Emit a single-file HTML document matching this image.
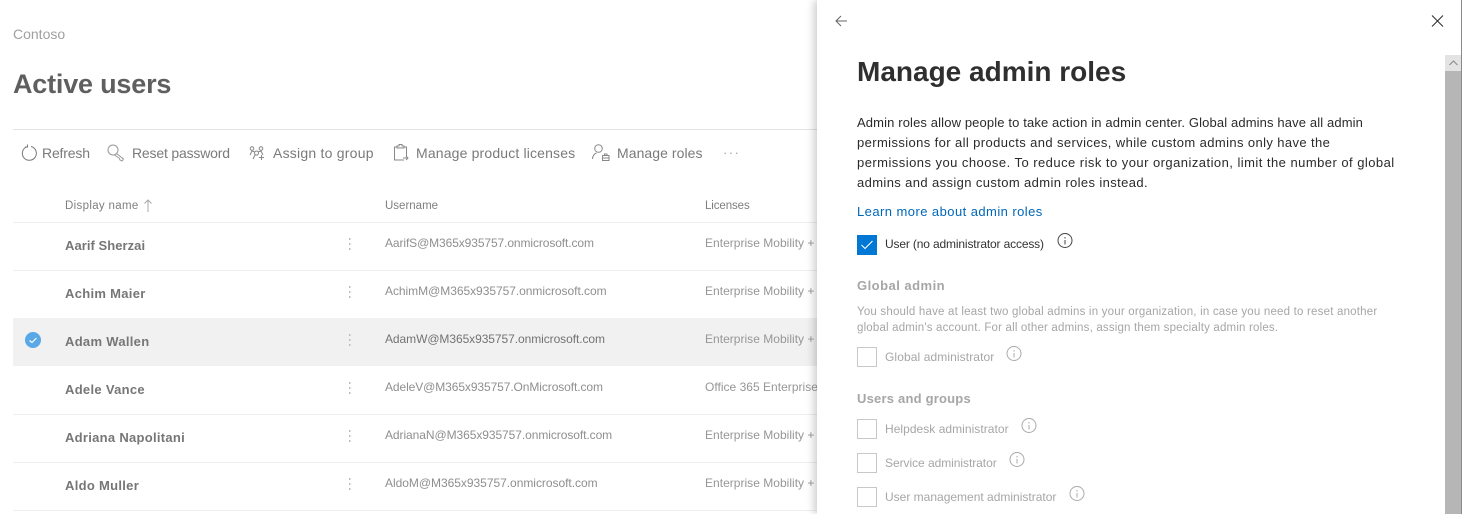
<!DOCTYPE html>
<html><head><meta charset="utf-8"><style>
html,body{margin:0;padding:0;background:#fff}
body{width:1462px;height:514px;overflow:hidden;position:relative;font-family:"Liberation Sans",sans-serif}
.t{position:absolute;white-space:nowrap;line-height:16px}
.b{position:absolute}
.n{font-size:13px;font-weight:bold;color:#767676;left:65px;letter-spacing:.3px}
.u{font-size:12px;color:#8f8f8f;left:385px;letter-spacing:-.07px}
.l{font-size:12px;color:#969696;left:705px;letter-spacing:.02px}
.c{font-size:14px;color:#7a7a7a}
.h{font-size:11.5px;color:#7f7f7f}
.line{position:absolute;left:13px;width:804px;height:1px;background:#eeeeee}
.cb{position:absolute;left:857px;width:18px;height:18px;border:1px solid #c8c8c8;background:#fff}
.d{font-size:12px;color:#a6a6a6;left:885px}
.p{font-size:13px;color:#2b2b2b;left:857px}
.g{font-size:13px;font-weight:bold;color:#a6a6a6;left:857px}
.s{font-size:11.5px;color:#a6a6a6;left:857px}
svg{position:absolute;overflow:visible}
</style></head><body>
<div class="t" style="left:13px;top:26px;font-size:14px;color:#a0a0a0">Contoso</div>
<div class="t" style="left:13px;top:66px;line-height:36px;font-size:27px;font-weight:bold;color:#5f5f5f;letter-spacing:-.2px">Active users</div>
<div class="line" style="top:129px;background:#e3e3e3"></div>

<svg style="left:21px;top:144px" width="18" height="18" fill="none" stroke="#777" stroke-width="1"><path d="M6 2.700A7 7 0 1 0 10 2.500M6.500 .5V3H4"/></svg>
<div class="t c" style="left:42px;top:145px;letter-spacing:-.17px">Refresh</div>
<svg style="left:107px;top:144px" width="18" height="18" fill="none" stroke="#999" stroke-width="1"><circle cx="6" cy="6" r="5"/><path d="M9.500 9.500l7 5.500-1.500 2-2-1-1-2-4.500-3"/></svg>
<div class="t c" style="left:132px;top:145px;letter-spacing:-.18px">Reset password</div>
<svg style="left:249px;top:146px" width="17" height="15" fill="none" stroke="#888" stroke-width="1"><circle cx="3" cy="2.500" r="1.800"/><circle cx="12" cy="2.500" r="1.800"/><circle cx="7.500" cy="7" r="2"/><path d="M1 9l2-4 3 1M14 9l-2-4-3 1M4 13l2-4h3M12.500 9v5M10 11.500h5"/></svg>
<div class="t c" style="left:273px;top:145px;letter-spacing:.23px">Assign to group</div>
<svg style="left:393px;top:144px" width="16" height="17" fill="none" stroke="#888" stroke-width="1"><path d="M4 3H1.500v13H11M11 3h2.500v10M4 4V2h2V.5h3V2h2v2zM10 14h5M13 12l2 2-2 2"/></svg>
<div class="t c" style="left:416px;top:145px;letter-spacing:.16px">Manage product licenses</div>
<svg style="left:592px;top:144px" width="18" height="17" fill="none" stroke="#888" stroke-width="1"><circle cx="6.500" cy="4.500" r="3.800"/><path d="M.5 15c0-3 2-5.500 4-6M10.500 11.500h6.500v5h-6.500zM10.500 14h6.500M12.500 11.500V10h2.500v1.500"/></svg>
<div class="t c" style="left:617px;top:145px;letter-spacing:.06px">Manage roles</div>
<div class="t" style="left:723px;top:145px;font-size:13px;color:#a6a6a6;letter-spacing:1.400px">···</div>

<div class="t h" style="left:65px;top:198px;letter-spacing:.33px">Display name</div>
<svg style="left:144px;top:199px" width="8" height="13" fill="none" stroke="#aaa"><path d="M4 13V1M.5 4.500L4 1l3.500 3.500"/></svg>
<div class="t h" style="left:385px;top:198px">Username</div>
<div class="t h" style="left:705px;top:198px;letter-spacing:-.1px">Licenses</div>
<div class="line" style="top:222px"></div>

<div class="t n" style="top:238px;letter-spacing:.05px">Aarif Sherzai</div>
<div class="t u" style="top:235px;letter-spacing:-.1px">AarifS@M365x935757.onmicrosoft.com</div>
<div class="t l" style="top:235px">Enterprise Mobility +</div>
<div class="line" style="top:270px"></div>

<div class="t n" style="top:286px">Achim Maier</div>
<div class="t u" style="top:283px;letter-spacing:-.04px">AchimM@M365x935757.onmicrosoft.com</div>
<div class="t l" style="top:283px">Enterprise Mobility +</div>

<div class="b" style="left:13px;top:318px;width:804px;height:48px;background:#f1f1f1"></div>
<svg style="left:25px;top:332px" width="16" height="16"><circle cx="8" cy="8" r="8" fill="#5ba8e6"/><path d="M4.500 8.500L7 10.500 11.500 6" fill="none" stroke="#fff" stroke-width="1.200"/></svg>
<div class="t n" style="top:334px">Adam Wallen</div>
<div class="t u" style="top:331px;color:#737373">AdamW@M365x935757.onmicrosoft.com</div>
<div class="t l" style="top:331px">Enterprise Mobility +</div>

<div class="t n" style="top:382px">Adele Vance</div>
<div class="t u" style="top:379px;letter-spacing:-.09px">AdeleV@M365x935757.OnMicrosoft.com</div>
<div class="t l" style="top:379px">Office 365 Enterprise</div>
<div class="line" style="top:414px"></div>

<div class="t n" style="top:430px;letter-spacing:.29px">Adriana Napolitani</div>
<div class="t u" style="top:427px">AdrianaN@M365x935757.onmicrosoft.com</div>
<div class="t l" style="top:427px">Enterprise Mobility +</div>
<div class="line" style="top:462px"></div>

<div class="t n" style="top:478px">Aldo Muller</div>
<div class="t u" style="top:475px;letter-spacing:-.03px">AldoM@M365x935757.onmicrosoft.com</div>
<div class="t l" style="top:475px">Enterprise Mobility +</div>
<div class="line" style="top:510px"></div>

<svg style="left:349px;top:238px" width="2" height="256" fill="#bdbdbd">
<rect y="0" width="1.500" height="2"/><rect y="5" width="1.500" height="2"/><rect y="10" width="1.500" height="2"/>
<rect y="48" width="1.500" height="2"/><rect y="53" width="1.500" height="2"/><rect y="58" width="1.500" height="2"/>
<rect y="96" width="1.500" height="2"/><rect y="101" width="1.500" height="2"/><rect y="106" width="1.500" height="2"/>
<rect y="144" width="1.500" height="2"/><rect y="149" width="1.500" height="2"/><rect y="154" width="1.500" height="2"/>
<rect y="192" width="1.500" height="2"/><rect y="197" width="1.500" height="2"/><rect y="202" width="1.500" height="2"/>
<rect y="240" width="1.500" height="2"/><rect y="245" width="1.500" height="2"/><rect y="250" width="1.500" height="2"/>
</svg>

<!-- panel -->
<div class="b" style="left:817px;top:0;width:645px;height:514px;background:#fff;box-shadow:-3px 0 8px rgba(0,0,0,.2)"></div>
<div class="b" style="left:1461px;top:0;width:1px;height:514px;background:#8a8a8a"></div>
<svg style="left:835px;top:15px" width="13" height="12" fill="none" stroke="#666" stroke-width="1"><path d="M12 6H1M6 1L1 6l5 5"/></svg>
<svg style="left:1431px;top:15px" width="13" height="12" fill="none" stroke="#333" stroke-width="1.100"><path d="M1 .5l11 11M12 .5l-11 11"/></svg>
<div class="b" style="left:1445px;top:55px;width:16px;height:459px;background:#b6b6b6"></div>
<div class="b" style="left:1445px;top:55px;width:16px;height:16px;background:#e3e3e3"></div>
<svg style="left:1449px;top:60px" width="9" height="6" fill="none" stroke="#888"><path d="M.5 5L4.500 1l4 4"/></svg>

<div class="t" style="left:857px;top:54px;line-height:36px;font-size:28px;font-weight:bold;color:#2f2f2f">Manage admin roles</div>
<div class="t p" style="top:115px;letter-spacing:.13px">Admin roles allow people to take action in admin center. Global admins have all admin</div>
<div class="t p" style="top:135px;letter-spacing:.39px">permissions for all products and services, while custom admins only have the</div>
<div class="t p" style="top:155px;letter-spacing:.46px">permissions you choose. To reduce risk to your organization, limit the number of global</div>
<div class="t p" style="top:175px;letter-spacing:.38px">admins and assign custom admin roles instead.</div>
<div class="t" style="left:857px;top:204px;font-size:13px;color:#0067b8;letter-spacing:.44px">Learn more about admin roles</div>

<div class="b" style="left:857px;top:235px;width:20px;height:20px;background:#0078d4"></div>
<svg style="left:861px;top:240px" width="12" height="10" fill="none" stroke="#fff" stroke-width="1.100"><path d="M.5 5l3.500 3.500L11.500 1"/></svg>
<div class="t" style="left:885px;top:236px;font-size:12px;color:#333;letter-spacing:-.15px">User (no administrator access)</div>
<svg style="left:1057px;top:233px" width="16" height="16" fill="none" stroke="#444"><circle cx="8" cy="7.500" r="7"/><path d="M8 7v4.500M8 4v1.500"/></svg>

<div class="t g" style="top:278px;letter-spacing:.48px">Global admin</div>
<div class="t s" style="top:304px;letter-spacing:.2px">You should have at least two global admins in your organization, in case you need to reset another</div>
<div class="t s" style="top:320px;letter-spacing:.18px">global admin's account. For all other admins, assign them specialty admin roles.</div>

<div class="cb" style="top:347px"></div>
<div class="t d" style="top:349px;letter-spacing:.1px">Global administrator</div>
<svg style="left:1006px;top:346px" width="16" height="16" fill="none" stroke="#aaa"><circle cx="8" cy="7.500" r="7"/><path d="M8 7v4.500M8 4v1.500"/></svg>

<div class="t g" style="top:391px;letter-spacing:.21px">Users and groups</div>

<div class="cb" style="top:419px"></div>
<div class="t d" style="top:421px;letter-spacing:.04px">Helpdesk administrator</div>
<svg style="left:1021px;top:418px" width="16" height="16" fill="none" stroke="#aaa"><circle cx="8" cy="7.500" r="7"/><path d="M8 7v4.500M8 4v1.500"/></svg>

<div class="cb" style="top:453px"></div>
<div class="t d" style="top:455px;letter-spacing:-.05px">Service administrator</div>
<svg style="left:1009px;top:452px" width="16" height="16" fill="none" stroke="#aaa"><circle cx="8" cy="7.500" r="7"/><path d="M8 7v4.500M8 4v1.500"/></svg>

<div class="cb" style="top:487px"></div>
<div class="t d" style="top:489px">User management administrator</div>
<svg style="left:1069px;top:486px" width="16" height="16" fill="none" stroke="#aaa"><circle cx="8" cy="7.500" r="7"/><path d="M8 7v4.500M8 4v1.500"/></svg>
</body></html>
